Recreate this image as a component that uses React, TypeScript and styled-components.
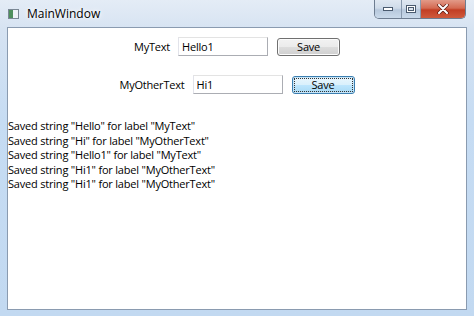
import React from 'react';
import styled, { createGlobalStyle } from 'styled-components';

const GlobalStyle = createGlobalStyle`
  html, body {
    margin: 0;
    padding: 0;
    width: 474px;
    height: 316px;
    overflow: hidden;
  }
`;

const log = [
  'Saved string "Hello" for label "MyText"',
  'Saved string "Hi" for label "MyOtherText"',
  'Saved string "Hello1" for label "MyText"',
  'Saved string "Hi1" for label "MyOtherText"',
  'Saved string "Hi1" for label "MyOtherText"',
];

export default function App() {
  return (
    <>
      <GlobalStyle />
      <Frame>
        <TitleBar>
          <AppIcon>
            <svg width="11" height="10" viewBox="0 0 11 10">
              <rect x="0.5" y="0.5" width="10" height="9" fill="#eef2f6" stroke="#7a8794" />
              <rect x="1" y="1" width="4" height="8" fill="#4f8f5c" />
            </svg>
          </AppIcon>
          <Title>MainWindow</Title>
          <Captions>
            <CaptionButton $w={26}>
              <svg width="10" height="4" viewBox="0 0 10 4">
                <rect x="0.5" y="0.5" width="9" height="3" fill="#fff" stroke="#4a5a6e" />
              </svg>
            </CaptionButton>
            <CaptionButton $w={18}>
              <svg width="10" height="8" viewBox="0 0 10 8">
                <rect x="0.5" y="0.5" width="9" height="7" fill="#fff" stroke="#4a5a6e" />
                <rect x="2.5" y="2.5" width="5" height="3" fill="#dbe4ee" stroke="#4a5a6e" />
              </svg>
            </CaptionButton>
            <CloseButton>
              <svg width="12" height="10" viewBox="0 0 12 10">
                <path d="M2 1 L10 9 M10 1 L2 9" stroke="#5a1a10" strokeWidth="3.4" strokeLinecap="round" />
                <path d="M2 1 L10 9 M10 1 L2 9" stroke="#fff" strokeWidth="2" strokeLinecap="round" />
              </svg>
            </CloseButton>
          </Captions>
        </TitleBar>
        <Client>
          <Form>
            <Row>
              <Label>MyText</Label>
              <TextBox defaultValue="Hello1" />
              <Button>Save</Button>
            </Row>
            <Row>
              <Label>MyOtherText</Label>
              <TextBox defaultValue="Hi1" />
              <Button $focused>
                <FocusRing>Save</FocusRing>
              </Button>
            </Row>
          </Form>
          <Log>
            {log.map((line, i) => (
              <LogLine key={i}>{line}</LogLine>
            ))}
          </Log>
        </Client>
      </Frame>
    </>
  );
}

const Frame = styled.div`
  width: 474px;
  height: 316px;
  box-sizing: border-box;
  display: flex;
  flex-direction: column;
  padding: 0 7px 0 7px;
  background: linear-gradient(180deg, #e4ecf6 0px, #d6e3f2 30px, #c6dcf3 120px, #c2d9f1 316px);
  font-family: 'Segoe UI', 'Open Sans', 'Noto Sans', sans-serif;
`;

const TitleBar = styled.div`
  height: 27px;
  flex: none;
  display: flex;
  align-items: flex-start;
`;

const AppIcon = styled.div`
  margin-top: 9px;
  margin-left: 1px;
  width: 16px;
  display: flex;
`;

const Title = styled.div`
  margin-top: 5px;
  margin-left: 3px;
  font-size: 12px;
  color: #000;
  text-shadow: 0 0 6px #fff, 0 0 3px #fff;
`;

const Captions = styled.div`
  margin-left: auto;
  margin-right: 1px;
  display: flex;
  height: 19px;
  border: 1px solid #6d7c90;
  border-top: none;
  border-radius: 0 0 5px 5px;
  overflow: hidden;
  box-sizing: border-box;
`;

const CaptionButton = styled.div<{ $w: number }>`
  width: ${(p) => p.$w}px;
  display: flex;
  align-items: center;
  justify-content: center;
  background: linear-gradient(180deg, #dfe7f1 0%, #cfdbe9 45%, #b7c8dc 55%, #c9d9ea 100%);
  border-right: 1px solid #8899ae;
`;

const CloseButton = styled.div`
  width: 44px;
  display: flex;
  align-items: center;
  justify-content: center;
  background: linear-gradient(180deg, #e29a88 0%, #d46a52 45%, #c23e24 55%, #cf5a3c 100%);
`;

const Client = styled.div`
  height: 283px;
  flex: none;
  box-sizing: border-box;
  background: #fff;
  border: 1px solid #8a9bb0;
  display: flex;
  flex-direction: column;
  font-family: 'Segoe UI', 'Open Sans', 'Noto Sans', sans-serif;
  font-size: 11px;
  letter-spacing: -0.2px;
  color: #000;
`;

const Form = styled.div`
  display: flex;
  flex-direction: column;
  align-items: center;
  padding-top: 9px;
  gap: 19px;
`;

const Row = styled.div`
  display: flex;
  align-items: center;
  gap: 8px;
  height: 19px;
`;

const Label = styled.span`
  font-size: 11px;
`;

const TextBox = styled.input`
  width: 90px;
  height: 19px;
  box-sizing: border-box;
  border: 1px solid #abadb3;
  border-top-color: #e3e3e3;
  border-left-color: #e2e3ea;
  padding: 0 3px;
  font: inherit;
  font-size: 11px;
  letter-spacing: -0.2px;
  outline: none;
`;

const Button = styled.div<{ $focused?: boolean }>`
  margin-left: 1px;
  width: 63px;
  height: 18px;
  box-sizing: border-box;
  border: 1px solid ${(p) => (p.$focused ? '#3c7fb1' : '#707070')};
  border-radius: 3px;
  background: ${(p) =>
    p.$focused
      ? 'linear-gradient(180deg, #eaf6fd 0%, #d9f0fc 50%, #bee6fd 51%, #a7d9f5 100%)'
      : 'linear-gradient(180deg, #f2f2f2 0%, #ebebeb 50%, #dddddd 51%, #cfcfcf 100%)'};
  box-shadow: inset 0 0 0 1px ${(p) => (p.$focused ? '#c6e4f7' : '#fcfcfc')};
  display: flex;
  align-items: center;
  justify-content: center;
  font-size: 11px;
  padding: 1px;
`;

const FocusRing = styled.div`
  flex: 1;
  align-self: stretch;
  display: flex;
  align-items: center;
  justify-content: center;
  outline: 1px dotted #333;
  outline-offset: -1px;
`;

const Log = styled.div`
  margin-top: 25px;
  display: flex;
  flex-direction: column;
`;

const LogLine = styled.div`
  font-size: 11px;
  line-height: 14.6px;
  white-space: nowrap;
`;
